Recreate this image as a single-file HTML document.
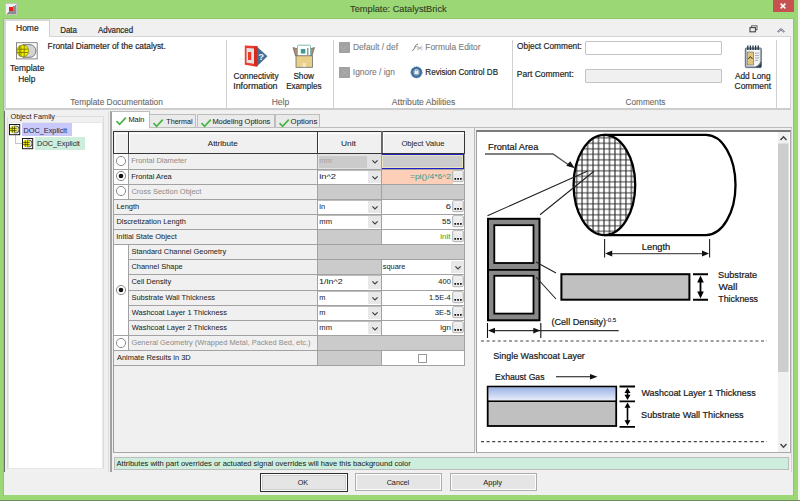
<!DOCTYPE html>
<html><head><meta charset="utf-8">
<style>
*{margin:0;padding:0;box-sizing:border-box}
html,body{width:800px;height:501px;overflow:hidden;background:#9cd775;font-family:"Liberation Sans",sans-serif;color:#1e1e1e;position:relative}
.a{position:absolute}
svg text{white-space:pre}
</style></head><body>
<div class="a" style="left:798px;top:0px;width:2px;height:501px;background:#f3f5f2"></div>
<div class="a" style="left:799.5px;top:0px;width:0.5px;height:501px;background:#d8d8d8"></div>
<div class="a" style="left:0px;top:500px;width:800px;height:1px;background:#6e8f5e"></div>
<svg class="a" style="left:5px;top:3px" width="12" height="12"><defs><linearGradient id="wi" x1="0" y1="0" x2="1" y2="1"><stop offset="0.5" stop-color="#f2f2f2"/><stop offset="0.5" stop-color="#8c8c8c"/></linearGradient></defs><rect x="0.5" y="0.5" width="11" height="11" fill="url(#wi)" stroke="#c4c4c4"/><rect x="4" y="4" width="4" height="4" fill="#ee1c1c"/></svg>
<div class="a" style="left:773px;top:0px;width:20.5px;height:12px;background:#c75050"></div>
<svg class="a" style="left:778px;top:1px" width="10" height="10"><path d="M2.6 2.6 L7.4 7.4 M7.4 2.6 L2.6 7.4" stroke="#fff" stroke-width="1.5"/></svg>
<div class="a" style="left:4px;top:17px;width:789px;height:1px;background:#a0da7a"></div>
<div class="a" style="left:4px;top:18px;width:789px;height:1px;background:#8cc866"></div>
<div class="a" style="left:4px;top:19px;width:789px;height:476px;background:#f0f0f0"></div>
<div class="a" style="left:5px;top:19px;width:787px;height:1px;background:#f6f4f8"></div>
<div class="a" style="left:3px;top:18px;width:1px;height:478px;background:#8cc866"></div>
<div class="a" style="left:4px;top:19px;width:1px;height:92px;background:#d4d4d4"></div>
<div class="a" style="left:793px;top:18px;width:1px;height:478px;background:#8cc866"></div>
<div class="a" style="left:5px;top:19px;width:787px;height:18px;background:#f0f0f0"></div>
<div class="a" style="left:5px;top:36px;width:786px;height:74px;background:#fff;border:1px solid #d5d5d5;border-bottom:2px solid #cdcdcd"></div>
<div class="a" style="left:5px;top:19px;width:45px;height:18px;background:#fff;border-left:1px solid #d5d5d5;border-right:1.5px solid #d0d0d0;border-top:2px solid #d8d8d8"></div>
<svg class="a" style="left:749px;top:25px" width="10" height="8"><rect x="2.6" y="0.8" width="5.4" height="4" fill="none" stroke="#555" stroke-width="0.9"/><rect x="1" y="2.6" width="5.4" height="4.2" fill="#f0f0f0" stroke="#444" stroke-width="1.1"/></svg>
<svg class="a" style="left:776px;top:26px" width="10" height="8"><path d="M1.6 5.6 L4.2 3 Q5 2.2 5.8 3 L8.4 5.6 Q7.6 6.4 6.8 5.6 L5 3.9 L3.2 5.6 Q2.4 6.4 1.6 5.6 Z" fill="none" stroke="#5a5f7a" stroke-width="0.9"/></svg>
<div class="a" style="left:226px;top:40px;width:1px;height:68px;background:#d0d0d0"></div>
<div class="a" style="left:333px;top:40px;width:1px;height:68px;background:#d0d0d0"></div>
<div class="a" style="left:512px;top:40px;width:1px;height:68px;background:#d0d0d0"></div>
<div class="a" style="left:776px;top:40px;width:1px;height:68px;background:#d0d0d0"></div>
<svg class="a" style="left:12px;top:38px" width="30" height="24" viewBox="12 38 30 24">
<rect x="16.5" y="42.7" width="20.7" height="16.2" fill="#fff" stroke="#7a7a7a" stroke-width="0.9"/>
<path d="M22.8 44.7 H30 A5.9 6.3 0 0 1 30 57.3 H22.8 Z" fill="#d4d4d4" stroke="#6a6a6a" stroke-width="0.9"/>
<circle cx="22.8" cy="50.9" r="5.9" fill="#f4f000" stroke="#707000" stroke-width="0.6"/>
<path d="M19.3 45.6 V56.2 M20.9 45.1 V56.7 M24.2 45.1 V56.7 M17.6 49.2 H28 M17.5 52.5 H28" stroke="#7a7a00" stroke-width="0.9"/>
</svg>
<svg class="a" style="left:243px;top:44px" width="26" height="24">
<path d="M14 2.8 L24.5 12.3 L14 22.2 Z" fill="#436e95"/>
<text x="15.3" y="16.2" font-size="9.5" font-weight="bold" fill="#f4f4f4" font-family="Liberation Sans">?</text>
<path d="M1.8 1.4 L14.4 2.2 L14.4 22.6 L1.8 20.8 Z" fill="#ee3a2c"/>
<path d="M11.2 2 L14.4 2.2 L14.4 22.6 L11.2 22.2 Z" fill="#d42a1e"/>
<path d="M3.5 4 L11 4.4 L11 19.8 L3.5 18.8 Z" fill="#dfe3e6"/>
<rect x="5" y="8" width="3.2" height="8" fill="#f23a2a"/>
</svg>
<svg class="a" style="left:291px;top:43px" width="26" height="26">
<path d="M2 4.5 L7 6 L7 13 L4.5 13 Z" fill="#a89070" stroke="#555" stroke-width="0.6"/>
<path d="M23.5 4.5 L18.5 6 L18.5 13 L21 13 Z" fill="#a89070" stroke="#555" stroke-width="0.6"/>
<rect x="6.5" y="2.2" width="13" height="11" rx="1" fill="#fff" stroke="#7fb9b3" stroke-width="1"/>
<rect x="9.8" y="6" width="4.5" height="4.5" fill="#3d9a8f"/>
<rect x="16" y="5" width="1.5" height="7" fill="#9a9a9a"/>
<rect x="5" y="12.8" width="16.5" height="11.5" fill="#e9cf8a" stroke="#6a6a6a" stroke-width="0.8"/>
<rect x="11.5" y="20" width="3.5" height="4" fill="#f3e6bf"/>
</svg>
<svg class="a" style="left:338px;top:41px" width="14" height="40"><rect x="1" y="1" width="11" height="11" fill="#a2a2a2"/><path d="M3.5 6.5 L5.5 8.5 L9.5 4" stroke="#b4b4b4" stroke-width="0.8" fill="none"/><rect x="1" y="26" width="11" height="11" fill="#a2a2a2"/><path d="M3.5 28.5 L9.5 34.5 M9.5 28.5 L3.5 34.5" stroke="#b4b4b4" stroke-width="0.8"/></svg>
<svg class="a" style="left:408px;top:40px" width="16" height="14"><path d="M4.2 10.6 Q5.6 10.4 6.6 8 L8 5.2 Q8.8 3.8 10 4.2" stroke="#7a7a7a" stroke-width="1" fill="none"/><path d="M6 6.6 H8.8" stroke="#8a8a8a" stroke-width="0.7"/><path d="M9.8 6.6 L13.4 9.6 M13.4 6.6 L9.8 9.6" stroke="#9a9a9a" stroke-width="0.9"/><path d="M9.6 6 Q9 8.1 9.6 10.2 M13.8 6 Q14.4 8.1 13.8 10.2" stroke="#b4b4b4" stroke-width="0.6" fill="none"/></svg>
<svg class="a" style="left:410px;top:66px" width="13" height="13">
<circle cx="6.5" cy="6.3" r="5.6" fill="#3d6b97" stroke="#5f89b0" stroke-width="1" stroke-dasharray="1.2 0.9"/>
<circle cx="6.5" cy="6.3" r="3.6" fill="#6f92b3"/>
<rect x="4.5" y="5" width="4" height="3.3" fill="#e8eef3"/>
<path d="M5.3 5 V3.8 H7.7 V5" stroke="#e8eef3" stroke-width="0.8" fill="none"/>
</svg>
<div class="a" style="left:585px;top:41px;width:137px;height:14px;background:#fff;border:1px solid #c3c3c3;border-radius:1px"></div>
<div class="a" style="left:585px;top:69px;width:137px;height:14px;background:#f0f0f0;border:1px solid #c3c3c3;border-radius:1px"></div>
<svg class="a" style="left:744px;top:44px" width="19" height="25">
<rect x="1.3" y="4" width="16" height="19.6" rx="1" fill="#aab3bd" stroke="#4f5f70" stroke-width="0.9"/>
<rect x="2.8" y="6" width="13" height="16" fill="#f4f6f8"/>
<rect x="3.2" y="8" width="6.4" height="13" fill="#e0c580" stroke="#66605a" stroke-width="0.6"/>
<path d="M4.3 15 L6.4 12.6 L8.5 15" stroke="#222" stroke-width="0.9" fill="none"/>
<path d="M11 9.2 H15 M11 11.6 H15 M11 14 H15 M11 16.4 H14" stroke="#8a939c" stroke-width="0.8"/>
<path d="M17.2 17.5 V23.3 H11.5 Z" fill="#2c3e50"/>
<path d="M13.2 22.2 L16.2 19.2" stroke="#fff" stroke-width="0.7"/>
<path d="M3.8 1.5 V6 M6.4 1.5 V6 M9 1.5 V6 M11.6 1.5 V6 M14.2 1.5 V6" stroke="#263544" stroke-width="1.3"/>
</svg>
<div class="a" style="left:4px;top:111px;width:1.2px;height:361px;background:#6d6d6d"></div>
<div class="a" style="left:5px;top:110.5px;width:100px;height:361px;background:#f0f0f0"></div>
<div class="a" style="left:6.5px;top:116.5px;width:97px;height:352px;border:1px solid #dcdcdc;border-top:none"></div>
<div class="a" style="left:56px;top:116px;width:48px;height:1px;background:#dcdcdc"></div>
<div class="a" style="left:8px;top:121.5px;width:95px;height:347px;background:#fff;border:1px solid #e8e8e8"></div>
<div class="a" style="left:21.6px;top:122.6px;width:50.6px;height:13.3px;background:#c8c8fa"></div>
<div class="a" style="left:34.5px;top:136.7px;width:50.9px;height:12.9px;background:#cdeedb"></div>
<div class="a" style="left:14.5px;top:135px;width:1px;height:8.5px;background:#c4c4c4"></div>
<div class="a" style="left:14.5px;top:143px;width:8px;height:1px;background:#c4c4c4"></div>
<svg class="a" style="left:8.7px;top:124px" width="12" height="12">
<rect x="0.5" y="0.5" width="10.2" height="10.2" fill="#fff" stroke="#1a1a1a" stroke-width="1"/>
<path d="M4.6 2.2 H7.6 A2.6 3.3 0 0 1 7.6 8.8 H4.6 Z" fill="#d8d8d8" stroke="#333" stroke-width="0.8"/>
<circle cx="4.4" cy="5.5" r="3.4" fill="#f2ee00"/>
<path d="M3.3 2.3 V8.7 M5.5 2.3 V8.7 M1.2 4.4 H7.6 M1.2 6.6 H7.6" stroke="#3a3a00" stroke-width="0.7"/>
</svg>
<svg class="a" style="left:22px;top:138px" width="12" height="12">
<rect x="0.5" y="0.5" width="10.2" height="10.2" fill="#fff" stroke="#1a1a1a" stroke-width="1"/>
<path d="M4.6 2.2 H7.6 A2.6 3.3 0 0 1 7.6 8.8 H4.6 Z" fill="#d8d8d8" stroke="#333" stroke-width="0.8"/>
<circle cx="4.4" cy="5.5" r="3.4" fill="#f2ee00"/>
<path d="M3.3 2.3 V8.7 M5.5 2.3 V8.7 M1.2 4.4 H7.6 M1.2 6.6 H7.6" stroke="#3a3a00" stroke-width="0.7"/>
</svg>
<div class="a" style="left:107.5px;top:111px;width:1px;height:361px;background:#dedede"></div>
<div class="a" style="left:110px;top:127px;width:682px;height:345px;border-left:2px solid #a2a2a2;border-top:1px solid #c2c2c2;border-right:1px solid #d4d4d4"></div>
<div class="a" style="left:149.3px;top:114px;width:47.19999999999999px;height:14px;background:#eaeaea;border:1px solid #bdbdbd;border-bottom:none"></div>
<div class="a" style="left:196.5px;top:114px;width:78.5px;height:14px;background:#eaeaea;border:1px solid #bdbdbd;border-bottom:none"></div>
<div class="a" style="left:275px;top:114px;width:44.60000000000002px;height:14px;background:#eaeaea;border:1px solid #bdbdbd;border-bottom:none"></div>
<div class="a" style="left:149.3px;top:127px;width:643px;height:1px;background:#bdbdbd"></div>
<div class="a" style="left:110px;top:111px;width:39.5px;height:17px;background:#fff;border:1px solid #bdbdbd;border-left:2px solid #a2a2a2;border-bottom:none"></div>
<div class="a" style="left:112px;top:127px;width:37px;height:1.5px;background:#fff"></div>
<svg class="a" style="left:115px;top:116px" width="12" height="10"><path d="M1.5 5.2 L4.6 8.3 L10.8 1.6" stroke="#45b545" stroke-width="1.7" fill="none"/></svg>
<svg class="a" style="left:152px;top:118px" width="12" height="10"><path d="M1.5 5.2 L4.6 8.3 L10.8 1.6" stroke="#45b545" stroke-width="1.7" fill="none"/></svg>
<svg class="a" style="left:200px;top:118px" width="12" height="10"><path d="M1.5 5.2 L4.6 8.3 L10.8 1.6" stroke="#45b545" stroke-width="1.7" fill="none"/></svg>
<svg class="a" style="left:278px;top:118px" width="12" height="10"><path d="M1.5 5.2 L4.6 8.3 L10.8 1.6" stroke="#45b545" stroke-width="1.7" fill="none"/></svg>
<div class="a" style="left:113px;top:131px;width:352px;height:22.5px;background:#f0f0f0;border:1.5px solid #363636;border-bottom-width:1.5px"></div>
<div class="a" style="left:114.5px;top:132.5px;width:349px;height:1px;background:#fff"></div>
<div class="a" style="left:114.5px;top:132.5px;width:1px;height:20px;background:#fff"></div>
<div class="a" style="left:129px;top:132.5px;width:1px;height:20px;background:#fff"></div>
<div class="a" style="left:128px;top:131px;width:1.2px;height:22px;background:#363636"></div>
<div class="a" style="left:318px;top:132.5px;width:1px;height:20px;background:#fff"></div>
<div class="a" style="left:317px;top:131px;width:1.2px;height:22px;background:#363636"></div>
<div class="a" style="left:382.5px;top:132.5px;width:1px;height:20px;background:#fff"></div>
<div class="a" style="left:380.5px;top:131px;width:2px;height:22px;background:#6a6a6a"></div>
<div class="a" style="left:113px;top:154px;width:15px;height:15px;background:#fff"></div>
<div class="a" style="left:128px;top:154px;width:189px;height:15px;background:#f0f0f0"></div>
<div class="a" style="left:317px;top:154px;width:64px;height:15px;background:#e2e2e2"></div>
<div class="a" style="left:318.5px;top:155.5px;width:48.5px;height:12px;background:#cbcbcb"></div>
<svg class="a" style="left:371px;top:158.5px" width="8" height="6"><path d="M1.4 1.4 L4 4 L6.6 1.4" stroke="#404040" stroke-width="1.2" fill="none"/></svg>
<div class="a" style="left:381px;top:154px;width:83px;height:15px;background:#cbcbcb;border:1.5px solid #2020c8;box-shadow:inset 0 0 0 1px #e8e4c0"></div>
<div class="a" style="left:113px;top:170px;width:15px;height:14px;background:#fff"></div>
<div class="a" style="left:128px;top:170px;width:189px;height:14px;background:#f0f0f0"></div>
<div class="a" style="left:317px;top:170px;width:64px;height:14px;background:#fff;border-top:1px solid #bdbdbd"></div>
<div class="a" style="left:367.5px;top:171px;width:13px;height:12px;background:#e8e8e8"></div>
<svg class="a" style="left:371px;top:174.5px" width="8" height="6"><path d="M1.4 1.4 L4 4 L6.6 1.4" stroke="#404040" stroke-width="1.2" fill="none"/></svg>
<div class="a" style="left:381px;top:170px;width:72px;height:14px;background:#fdcfb8"></div>
<div class="a" style="left:453px;top:170px;width:12px;height:14px;background:#fff"></div>
<svg class="a" style="left:451px;top:169px" width="14" height="15"><rect x="1.7" y="1.7" width="10.6" height="11" rx="1.2" fill="#ececec" stroke="#b0b0b0" stroke-width="1"/><path d="M2.6 3 H11.4" stroke="#fafafa" stroke-width="1"/><path d="M3.4 9.8 h1.7 M6.2 9.8 h1.7 M9 9.8 h1.7" stroke="#151515" stroke-width="1.7"/></svg>
<div class="a" style="left:113px;top:185px;width:15px;height:14px;background:#fff"></div>
<div class="a" style="left:128px;top:185px;width:189px;height:14px;background:#f0f0f0"></div>
<div class="a" style="left:317px;top:185px;width:64px;height:14px;background:#cbcbcb"></div>
<div class="a" style="left:381px;top:185px;width:84px;height:14px;background:#cbcbcb"></div>
<div class="a" style="left:113px;top:200px;width:204px;height:14px;background:#f0f0f0"></div>
<div class="a" style="left:317px;top:200px;width:64px;height:14px;background:#fff;border-top:1px solid #bdbdbd"></div>
<div class="a" style="left:367.5px;top:201px;width:13px;height:12px;background:#e8e8e8"></div>
<svg class="a" style="left:371px;top:204.5px" width="8" height="6"><path d="M1.4 1.4 L4 4 L6.6 1.4" stroke="#404040" stroke-width="1.2" fill="none"/></svg>
<div class="a" style="left:381px;top:200px;width:72px;height:14px;background:#fff"></div>
<div class="a" style="left:453px;top:200px;width:12px;height:14px;background:#fff"></div>
<svg class="a" style="left:451px;top:199px" width="14" height="15"><rect x="1.7" y="1.7" width="10.6" height="11" rx="1.2" fill="#ececec" stroke="#b0b0b0" stroke-width="1"/><path d="M2.6 3 H11.4" stroke="#fafafa" stroke-width="1"/><path d="M3.4 9.8 h1.7 M6.2 9.8 h1.7 M9 9.8 h1.7" stroke="#151515" stroke-width="1.7"/></svg>
<div class="a" style="left:113px;top:215px;width:204px;height:14px;background:#f0f0f0"></div>
<div class="a" style="left:317px;top:215px;width:64px;height:14px;background:#fff;border-top:1px solid #bdbdbd"></div>
<div class="a" style="left:367.5px;top:216px;width:13px;height:12px;background:#e8e8e8"></div>
<svg class="a" style="left:371px;top:219.5px" width="8" height="6"><path d="M1.4 1.4 L4 4 L6.6 1.4" stroke="#404040" stroke-width="1.2" fill="none"/></svg>
<div class="a" style="left:381px;top:215px;width:72px;height:14px;background:#fff"></div>
<div class="a" style="left:453px;top:215px;width:12px;height:14px;background:#fff"></div>
<svg class="a" style="left:451px;top:214px" width="14" height="15"><rect x="1.7" y="1.7" width="10.6" height="11" rx="1.2" fill="#ececec" stroke="#b0b0b0" stroke-width="1"/><path d="M2.6 3 H11.4" stroke="#fafafa" stroke-width="1"/><path d="M3.4 9.8 h1.7 M6.2 9.8 h1.7 M9 9.8 h1.7" stroke="#151515" stroke-width="1.7"/></svg>
<div class="a" style="left:113px;top:230px;width:204px;height:14px;background:#f0f0f0"></div>
<div class="a" style="left:317px;top:230px;width:64px;height:14px;background:#cbcbcb"></div>
<div class="a" style="left:381px;top:230px;width:72px;height:14px;background:#fff"></div>
<div class="a" style="left:453px;top:230px;width:12px;height:14px;background:#fff"></div>
<svg class="a" style="left:451px;top:229px" width="14" height="15"><rect x="1.7" y="1.7" width="10.6" height="11" rx="1.2" fill="#ececec" stroke="#b0b0b0" stroke-width="1"/><path d="M2.6 3 H11.4" stroke="#fafafa" stroke-width="1"/><path d="M3.4 9.8 h1.7 M6.2 9.8 h1.7 M9 9.8 h1.7" stroke="#151515" stroke-width="1.7"/></svg>
<div class="a" style="left:113px;top:245px;width:15px;height:14px;background:#fff"></div>
<div class="a" style="left:128px;top:245px;width:189px;height:14px;background:#f0f0f0"></div>
<div class="a" style="left:317px;top:245px;width:148px;height:14px;background:#cbcbcb"></div>
<div class="a" style="left:113px;top:260px;width:15px;height:14px;background:#fff"></div>
<div class="a" style="left:128px;top:260px;width:189px;height:14px;background:#f0f0f0"></div>
<div class="a" style="left:317px;top:260px;width:64px;height:14px;background:#cbcbcb"></div>
<div class="a" style="left:381px;top:260px;width:84px;height:14px;background:#fff"></div>
<div class="a" style="left:451px;top:261px;width:13px;height:12px;background:#e8e8e8"></div>
<svg class="a" style="left:453.5px;top:264.5px" width="8" height="6"><path d="M1.4 1.4 L4 4 L6.6 1.4" stroke="#404040" stroke-width="1.2" fill="none"/></svg>
<div class="a" style="left:113px;top:275px;width:15px;height:15px;background:#fff"></div>
<div class="a" style="left:128px;top:275px;width:189px;height:15px;background:#f0f0f0"></div>
<div class="a" style="left:317px;top:275px;width:64px;height:15px;background:#fff;border-top:1px solid #bdbdbd"></div>
<div class="a" style="left:367.5px;top:276px;width:13px;height:13px;background:#e8e8e8"></div>
<svg class="a" style="left:371px;top:279.5px" width="8" height="6"><path d="M1.4 1.4 L4 4 L6.6 1.4" stroke="#404040" stroke-width="1.2" fill="none"/></svg>
<div class="a" style="left:381px;top:275px;width:72px;height:15px;background:#fff"></div>
<div class="a" style="left:453px;top:275px;width:12px;height:15px;background:#fff"></div>
<svg class="a" style="left:451px;top:274px" width="14" height="15"><rect x="1.7" y="1.7" width="10.6" height="11" rx="1.2" fill="#ececec" stroke="#b0b0b0" stroke-width="1"/><path d="M2.6 3 H11.4" stroke="#fafafa" stroke-width="1"/><path d="M3.4 9.8 h1.7 M6.2 9.8 h1.7 M9 9.8 h1.7" stroke="#151515" stroke-width="1.7"/></svg>
<div class="a" style="left:113px;top:291px;width:15px;height:14px;background:#fff"></div>
<div class="a" style="left:128px;top:291px;width:189px;height:14px;background:#f0f0f0"></div>
<div class="a" style="left:317px;top:291px;width:64px;height:14px;background:#fff;border-top:1px solid #bdbdbd"></div>
<div class="a" style="left:367.5px;top:292px;width:13px;height:12px;background:#e8e8e8"></div>
<svg class="a" style="left:371px;top:295.5px" width="8" height="6"><path d="M1.4 1.4 L4 4 L6.6 1.4" stroke="#404040" stroke-width="1.2" fill="none"/></svg>
<div class="a" style="left:381px;top:291px;width:72px;height:14px;background:#fff"></div>
<div class="a" style="left:453px;top:291px;width:12px;height:14px;background:#fff"></div>
<svg class="a" style="left:451px;top:290px" width="14" height="15"><rect x="1.7" y="1.7" width="10.6" height="11" rx="1.2" fill="#ececec" stroke="#b0b0b0" stroke-width="1"/><path d="M2.6 3 H11.4" stroke="#fafafa" stroke-width="1"/><path d="M3.4 9.8 h1.7 M6.2 9.8 h1.7 M9 9.8 h1.7" stroke="#151515" stroke-width="1.7"/></svg>
<div class="a" style="left:113px;top:306px;width:15px;height:14px;background:#fff"></div>
<div class="a" style="left:128px;top:306px;width:189px;height:14px;background:#f0f0f0"></div>
<div class="a" style="left:317px;top:306px;width:64px;height:14px;background:#fff;border-top:1px solid #bdbdbd"></div>
<div class="a" style="left:367.5px;top:307px;width:13px;height:12px;background:#e8e8e8"></div>
<svg class="a" style="left:371px;top:310.5px" width="8" height="6"><path d="M1.4 1.4 L4 4 L6.6 1.4" stroke="#404040" stroke-width="1.2" fill="none"/></svg>
<div class="a" style="left:381px;top:306px;width:72px;height:14px;background:#fff"></div>
<div class="a" style="left:453px;top:306px;width:12px;height:14px;background:#fff"></div>
<svg class="a" style="left:451px;top:305px" width="14" height="15"><rect x="1.7" y="1.7" width="10.6" height="11" rx="1.2" fill="#ececec" stroke="#b0b0b0" stroke-width="1"/><path d="M2.6 3 H11.4" stroke="#fafafa" stroke-width="1"/><path d="M3.4 9.8 h1.7 M6.2 9.8 h1.7 M9 9.8 h1.7" stroke="#151515" stroke-width="1.7"/></svg>
<div class="a" style="left:113px;top:321px;width:15px;height:14px;background:#fff"></div>
<div class="a" style="left:128px;top:321px;width:189px;height:14px;background:#f0f0f0"></div>
<div class="a" style="left:317px;top:321px;width:64px;height:14px;background:#fff;border-top:1px solid #bdbdbd"></div>
<div class="a" style="left:367.5px;top:322px;width:13px;height:12px;background:#e8e8e8"></div>
<svg class="a" style="left:371px;top:325.5px" width="8" height="6"><path d="M1.4 1.4 L4 4 L6.6 1.4" stroke="#404040" stroke-width="1.2" fill="none"/></svg>
<div class="a" style="left:381px;top:321px;width:72px;height:14px;background:#fff"></div>
<div class="a" style="left:453px;top:321px;width:12px;height:14px;background:#fff"></div>
<svg class="a" style="left:451px;top:320px" width="14" height="15"><rect x="1.7" y="1.7" width="10.6" height="11" rx="1.2" fill="#ececec" stroke="#b0b0b0" stroke-width="1"/><path d="M2.6 3 H11.4" stroke="#fafafa" stroke-width="1"/><path d="M3.4 9.8 h1.7 M6.2 9.8 h1.7 M9 9.8 h1.7" stroke="#151515" stroke-width="1.7"/></svg>
<div class="a" style="left:113px;top:336px;width:15px;height:14px;background:#fff"></div>
<div class="a" style="left:128px;top:336px;width:189px;height:14px;background:#f0f0f0"></div>
<div class="a" style="left:317px;top:336px;width:148px;height:14px;background:#cbcbcb"></div>
<div class="a" style="left:113px;top:351px;width:204px;height:14px;background:#f0f0f0"></div>
<div class="a" style="left:317px;top:351px;width:64px;height:14px;background:#cbcbcb"></div>
<div class="a" style="left:381px;top:351px;width:84px;height:14px;background:#fff"></div>
<div class="a" style="left:418px;top:353.5px;width:9px;height:9px;background:#fff;border:1px solid #9a9a9a"></div>
<div class="a" style="left:113px;top:245px;width:15px;height:90px;background:#fff"></div>
<div class="a" style="left:113px;top:169px;width:352px;height:1px;background:#a2a2a2"></div>
<div class="a" style="left:113px;top:184px;width:352px;height:1px;background:#a2a2a2"></div>
<div class="a" style="left:113px;top:199px;width:352px;height:1px;background:#a2a2a2"></div>
<div class="a" style="left:113px;top:214px;width:352px;height:1px;background:#a2a2a2"></div>
<div class="a" style="left:113px;top:229px;width:352px;height:1px;background:#a2a2a2"></div>
<div class="a" style="left:113px;top:244px;width:352px;height:1px;background:#a2a2a2"></div>
<div class="a" style="left:128px;top:259px;width:337px;height:1px;background:#a2a2a2"></div>
<div class="a" style="left:128px;top:274px;width:337px;height:1px;background:#a2a2a2"></div>
<div class="a" style="left:128px;top:290px;width:337px;height:1px;background:#a2a2a2"></div>
<div class="a" style="left:128px;top:305px;width:337px;height:1px;background:#a2a2a2"></div>
<div class="a" style="left:128px;top:320px;width:337px;height:1px;background:#a2a2a2"></div>
<div class="a" style="left:113px;top:335px;width:352px;height:1px;background:#a2a2a2"></div>
<div class="a" style="left:113px;top:350px;width:352px;height:1px;background:#a2a2a2"></div>
<div class="a" style="left:113px;top:365px;width:352px;height:1px;background:#a2a2a2"></div>
<div class="a" style="left:128px;top:154px;width:1px;height:15px;background:#a2a2a2"></div>
<div class="a" style="left:317px;top:154px;width:1.2px;height:15px;background:#a2a2a2"></div>
<div class="a" style="left:381px;top:154px;width:1.2px;height:15px;background:#a2a2a2"></div>
<div class="a" style="left:463.8px;top:154px;width:1.2px;height:15px;background:#a2a2a2"></div>
<div class="a" style="left:128px;top:170px;width:1px;height:14px;background:#a2a2a2"></div>
<div class="a" style="left:317px;top:170px;width:1.2px;height:14px;background:#a2a2a2"></div>
<div class="a" style="left:381px;top:170px;width:1.2px;height:14px;background:#a2a2a2"></div>
<div class="a" style="left:463.8px;top:170px;width:1.2px;height:14px;background:#a2a2a2"></div>
<div class="a" style="left:128px;top:185px;width:1px;height:14px;background:#a2a2a2"></div>
<div class="a" style="left:317px;top:185px;width:1.2px;height:14px;background:#a2a2a2"></div>
<div class="a" style="left:381px;top:185px;width:1.2px;height:14px;background:#a2a2a2"></div>
<div class="a" style="left:463.8px;top:185px;width:1.2px;height:14px;background:#a2a2a2"></div>
<div class="a" style="left:317px;top:200px;width:1.2px;height:14px;background:#a2a2a2"></div>
<div class="a" style="left:381px;top:200px;width:1.2px;height:14px;background:#a2a2a2"></div>
<div class="a" style="left:463.8px;top:200px;width:1.2px;height:14px;background:#a2a2a2"></div>
<div class="a" style="left:317px;top:215px;width:1.2px;height:14px;background:#a2a2a2"></div>
<div class="a" style="left:381px;top:215px;width:1.2px;height:14px;background:#a2a2a2"></div>
<div class="a" style="left:463.8px;top:215px;width:1.2px;height:14px;background:#a2a2a2"></div>
<div class="a" style="left:317px;top:230px;width:1.2px;height:14px;background:#a2a2a2"></div>
<div class="a" style="left:381px;top:230px;width:1.2px;height:14px;background:#a2a2a2"></div>
<div class="a" style="left:463.8px;top:230px;width:1.2px;height:14px;background:#a2a2a2"></div>
<div class="a" style="left:128px;top:245px;width:1px;height:14px;background:#a2a2a2"></div>
<div class="a" style="left:317px;top:245px;width:1.2px;height:14px;background:#a2a2a2"></div>
<div class="a" style="left:463.8px;top:245px;width:1.2px;height:14px;background:#a2a2a2"></div>
<div class="a" style="left:128px;top:260px;width:1px;height:14px;background:#a2a2a2"></div>
<div class="a" style="left:317px;top:260px;width:1.2px;height:14px;background:#a2a2a2"></div>
<div class="a" style="left:381px;top:260px;width:1.2px;height:14px;background:#a2a2a2"></div>
<div class="a" style="left:463.8px;top:260px;width:1.2px;height:14px;background:#a2a2a2"></div>
<div class="a" style="left:128px;top:275px;width:1px;height:15px;background:#a2a2a2"></div>
<div class="a" style="left:317px;top:275px;width:1.2px;height:15px;background:#a2a2a2"></div>
<div class="a" style="left:381px;top:275px;width:1.2px;height:15px;background:#a2a2a2"></div>
<div class="a" style="left:463.8px;top:275px;width:1.2px;height:15px;background:#a2a2a2"></div>
<div class="a" style="left:128px;top:291px;width:1px;height:14px;background:#a2a2a2"></div>
<div class="a" style="left:317px;top:291px;width:1.2px;height:14px;background:#a2a2a2"></div>
<div class="a" style="left:381px;top:291px;width:1.2px;height:14px;background:#a2a2a2"></div>
<div class="a" style="left:463.8px;top:291px;width:1.2px;height:14px;background:#a2a2a2"></div>
<div class="a" style="left:128px;top:306px;width:1px;height:14px;background:#a2a2a2"></div>
<div class="a" style="left:317px;top:306px;width:1.2px;height:14px;background:#a2a2a2"></div>
<div class="a" style="left:381px;top:306px;width:1.2px;height:14px;background:#a2a2a2"></div>
<div class="a" style="left:463.8px;top:306px;width:1.2px;height:14px;background:#a2a2a2"></div>
<div class="a" style="left:128px;top:321px;width:1px;height:14px;background:#a2a2a2"></div>
<div class="a" style="left:317px;top:321px;width:1.2px;height:14px;background:#a2a2a2"></div>
<div class="a" style="left:381px;top:321px;width:1.2px;height:14px;background:#a2a2a2"></div>
<div class="a" style="left:463.8px;top:321px;width:1.2px;height:14px;background:#a2a2a2"></div>
<div class="a" style="left:128px;top:336px;width:1px;height:14px;background:#a2a2a2"></div>
<div class="a" style="left:317px;top:336px;width:1.2px;height:14px;background:#a2a2a2"></div>
<div class="a" style="left:463.8px;top:336px;width:1.2px;height:14px;background:#a2a2a2"></div>
<div class="a" style="left:317px;top:351px;width:1.2px;height:14px;background:#a2a2a2"></div>
<div class="a" style="left:381px;top:351px;width:1.2px;height:14px;background:#a2a2a2"></div>
<div class="a" style="left:463.8px;top:351px;width:1.2px;height:14px;background:#a2a2a2"></div>
<div class="a" style="left:112.5px;top:153px;width:1.5px;height:212px;background:#a2a2a2"></div>
<svg class="a" style="left:115px;top:155.1px" width="12" height="12"><circle cx="6" cy="6" r="4.6" fill="#fff" stroke="#8c8c8c" stroke-width="1"/></svg>
<svg class="a" style="left:115px;top:170.2px" width="12" height="12"><circle cx="6" cy="6" r="4.6" fill="#fff" stroke="#8c8c8c" stroke-width="1"/><circle cx="6" cy="6" r="2.3" fill="#141414"/></svg>
<svg class="a" style="left:115px;top:185.3px" width="12" height="12"><circle cx="6" cy="6" r="4.6" fill="#fff" stroke="#8c8c8c" stroke-width="1"/></svg>
<svg class="a" style="left:115px;top:283.5px" width="12" height="12"><circle cx="6" cy="6" r="4.6" fill="#fff" stroke="#8c8c8c" stroke-width="1"/><circle cx="6" cy="6" r="2.3" fill="#141414"/></svg>
<svg class="a" style="left:115px;top:337.0px" width="12" height="12"><circle cx="6" cy="6" r="4.6" fill="#fff" stroke="#8c8c8c" stroke-width="1"/></svg>
<div class="a" style="left:113px;top:152.5px;width:352px;height:1.5px;background:#363636"></div>
<div class="a" style="left:474px;top:127.5px;width:1px;height:325px;background:#b8b8b8"></div>
<div class="a" style="left:112.5px;top:366px;width:1.2px;height:87px;background:#9c9c9c"></div>
<div class="a" style="left:112.5px;top:452px;width:362px;height:1.3px;background:#a8a8a8"></div>
<div class="a" style="left:112.5px;top:453.5px;width:362px;height:1px;background:#fafafa"></div>
<div class="a" style="left:114px;top:456.5px;width:675px;height:13px;background:#cdeedc;border:1px solid #bcbcbc"></div>
<div class="a" style="left:260px;top:473px;width:88px;height:19px;background:#e5e5e5;border:1px solid #2d2d2d;box-shadow:inset 0 0 0 1px #fdfdfd, inset 0 0 0 2px #d0d0d0"></div>
<div class="a" style="left:355px;top:473.3px;width:87px;height:18.2px;background:#e5e5e5;border:1px solid #adadad;box-shadow:inset 0 0 0 1px #fdfdfd"></div>
<div class="a" style="left:449.5px;top:473.3px;width:87.3px;height:18.2px;background:#e5e5e5;border:1px solid #adadad;box-shadow:inset 0 0 0 1px #fdfdfd"></div>
<!-- image panel -->
<div class="a" style="left:476px;top:130px;width:315px;height:323px;background:#fff;border:1px solid #a8a8a8;border-top:2px solid #7a7a7a;border-left:1px solid #a0a0a0"></div>
<svg class="a" style="left:0;top:0" width="800" height="501" viewBox="0 0 800 501">
<defs>
<pattern id="grid" patternUnits="userSpaceOnUse" x="573.86" y="173.55" width="5.48" height="5.5">
<rect x="0" y="0" width="5.48" height="5.5" fill="#fff"/>
<path d="M0 2.75 H5.48 M2.74 0 V5.5" stroke="#2a2a2a" stroke-width="1.1"/>
</pattern>
<linearGradient id="wash" x1="0" y1="0" x2="0" y2="1">
<stop offset="0" stop-color="#9cb3e6"/><stop offset="1" stop-color="#e9eefa"/>
</linearGradient>
<clipPath id="pclip"><rect x="478" y="132" width="300" height="320"/></clipPath>
</defs>
<g clip-path="url(#pclip)">
<path d="M485 154 H553 L571 166.5" stroke="#555" stroke-width="1.4" fill="none"/>
<path d="M574.8 168.2 L566.3 165.8 L570.2 161.2 Z" fill="#111"/>
<path d="M604.4 134.9 H706 A29.5 50.1 0 0 1 706 235.1 H604.4" stroke="#000" stroke-width="2.3" fill="#fff"/>
<ellipse cx="604.4" cy="185" rx="30.8" ry="50.1" fill="url(#grid)" stroke="#000" stroke-width="2.3"/>
<path d="M487.5 215.8 L587.2 171.2 M540 214.7 L594 171.2" stroke="#222" stroke-width="1.1" fill="none"/>
<!-- length dim -->
<path d="M604.6 239 V257.5 M709.6 239 V257.5" stroke="#222" stroke-width="1.1"/>
<path d="M608 253.6 H706" stroke="#555" stroke-width="1.4"/>
<path d="M605.2 253.6 L612.2 250.6 L612.2 256.6 Z M709 253.6 L702 250.6 L702 256.6 Z" fill="#111"/>
<!-- squares -->
<rect x="488" y="218.8" width="51.5" height="101.5" fill="#888" stroke="#000" stroke-width="2"/>
<path d="M488 269.8 H539.5" stroke="#000" stroke-width="1.8"/>
<rect x="494.3" y="225.2" width="39.2" height="37.8" fill="#fff" stroke="#000" stroke-width="1.8"/>
<rect x="494.3" y="275.8" width="39.2" height="37.8" fill="#fff" stroke="#000" stroke-width="1.8"/>
<path d="M536 262 L556 273 M536 277 L556 299" stroke="#222" stroke-width="1.1"/>
<rect x="561.4" y="274.2" width="128" height="25.5" fill="#c0c0c0" stroke="#000" stroke-width="2"/>
<path d="M693 274.2 H708 M693 299.8 H708" stroke="#000" stroke-width="2"/>
<path d="M700.5 280 V294" stroke="#000" stroke-width="1.8"/>
<path d="M700.5 275.5 L697.2 282.5 L703.8 282.5 Z M700.5 298.5 L697.2 291.5 L703.8 291.5 Z" fill="#000"/>
<!-- cell density dim -->
<path d="M487.5 323 V338 M540.8 323 V338" stroke="#111" stroke-width="1.1"/>
<path d="M490 330.6 H618.7" stroke="#333" stroke-width="1.2"/>
<path d="M488 330.6 L495 327.8 L495 333.4 Z M540.3 330.6 L533.3 327.8 L533.3 333.4 Z" fill="#111"/>
<path d="M481 341 H767" stroke="#444" stroke-width="1.1" stroke-dasharray="3 2.6"/>
<path d="M556 376.8 H592" stroke="#111" stroke-width="1.1"/>
<path d="M597.5 376.8 L590 374 L590 379.6 Z" fill="#111"/>
<rect x="487.7" y="386.6" width="128.5" height="39.4" fill="#c0c0c0" stroke="#000" stroke-width="1.8"/>
<rect x="488.6" y="387.5" width="126.7" height="13" fill="url(#wash)"/>
<path d="M487.7 401.2 H616.2" stroke="#000" stroke-width="1.6"/>
<path d="M619.5 386.5 H635 M619.5 401.3 H635 M619.5 426.8 H635" stroke="#000" stroke-width="1.8"/>
<path d="M627.5 390 V398 M627.5 405 V423" stroke="#000" stroke-width="1.6"/>
<path d="M627.5 387.8 L624.5 393 L630.5 393 Z M627.5 400 L624.5 394.8 L630.5 394.8 Z M627.5 402.6 L624.5 407.8 L630.5 407.8 Z M627.5 425.5 L624.5 420.3 L630.5 420.3 Z" fill="#000"/>
<path d="M481 441.6 H767" stroke="#444" stroke-width="1.1" stroke-dasharray="3 2.6"/>
</g>
<!-- scrollbar -->
<rect x="778" y="132" width="11" height="320" fill="#f0f0f0"/>
<rect x="778" y="143.5" width="10.5" height="228.5" fill="#cdcdcd"/>
<path d="M780.5 140 L783.5 136.8 L786.5 140" stroke="#444" stroke-width="1.4" fill="none"/>
<path d="M780.5 444 L783.5 447.2 L786.5 444" stroke="#444" stroke-width="1.4" fill="none"/>
</svg>

<svg class="a" style="left:0;top:0" width="800" height="501" font-family="Liberation Sans, sans-serif">
<text x="350.00" y="12" font-size="9.3" textLength="96.69" lengthAdjust="spacingAndGlyphs" fill="#30402a" stroke="#30402a" stroke-width="0.12">Template: CatalystBrick</text>
<text x="16.00" y="31" font-size="8.3" textLength="22.68" lengthAdjust="spacingAndGlyphs" fill="#1e1e1e" stroke="#1e1e1e" stroke-width="0.18">Home</text>
<text x="60.15" y="32.7" font-size="8.3" textLength="16.86" lengthAdjust="spacingAndGlyphs" fill="#1e1e1e" stroke="#1e1e1e" stroke-width="0.18">Data</text>
<text x="97.98" y="32.7" font-size="8.3" textLength="35.12" lengthAdjust="spacingAndGlyphs" fill="#1e1e1e" stroke="#1e1e1e" stroke-width="0.18">Advanced</text>
<text x="10.06" y="70.9" font-size="8.3" textLength="34.31" lengthAdjust="spacingAndGlyphs" fill="#1e1e1e" stroke="#1e1e1e" stroke-width="0.18">Template</text>
<text x="18.22" y="81.75" font-size="8.3" textLength="17.13" lengthAdjust="spacingAndGlyphs" fill="#1e1e1e" stroke="#1e1e1e" stroke-width="0.18">Help</text>
<text x="47.57" y="48.8" font-size="8.3" textLength="118.19" lengthAdjust="spacingAndGlyphs" fill="#1e1e1e" stroke="#1e1e1e" stroke-width="0.18">Frontal Diameter of the catalyst.</text>
<text x="70.32" y="104.7" font-size="8.3" textLength="92.63" lengthAdjust="spacingAndGlyphs" fill="#6a6a6a" stroke="#6a6a6a" stroke-width="0.1">Template Documentation</text>
<text x="233.58" y="78.5" font-size="8.3" textLength="44.94" lengthAdjust="spacingAndGlyphs" fill="#1e1e1e" stroke="#1e1e1e" stroke-width="0.18">Connectivity</text>
<text x="233.18" y="89.4" font-size="8.3" textLength="44.40" lengthAdjust="spacingAndGlyphs" fill="#1e1e1e" stroke="#1e1e1e" stroke-width="0.18">Information</text>
<text x="293.38" y="78.6" font-size="8.3" textLength="20.60" lengthAdjust="spacingAndGlyphs" fill="#1e1e1e" stroke="#1e1e1e" stroke-width="0.18">Show</text>
<text x="286.24" y="89.25" font-size="8.3" textLength="35.30" lengthAdjust="spacingAndGlyphs" fill="#1e1e1e" stroke="#1e1e1e" stroke-width="0.18">Examples</text>
<text x="271.70" y="104.7" font-size="8.3" textLength="17.45" lengthAdjust="spacingAndGlyphs" fill="#6a6a6a" stroke="#6a6a6a" stroke-width="0.1">Help</text>
<text x="352.91" y="50.4" font-size="8.3" textLength="45.08" lengthAdjust="spacingAndGlyphs" fill="#7c7c7c" stroke="#7c7c7c" stroke-width="0.1">Default / def</text>
<text x="352.83" y="75" font-size="8.3" textLength="42.13" lengthAdjust="spacingAndGlyphs" fill="#7c7c7c" stroke="#7c7c7c" stroke-width="0.1">Ignore / ign</text>
<text x="425.31" y="50.4" font-size="8.3" textLength="55.22" lengthAdjust="spacingAndGlyphs" fill="#7c7c7c" stroke="#7c7c7c" stroke-width="0.1">Formula Editor</text>
<text x="425.34" y="75" font-size="8.3" textLength="72.69" lengthAdjust="spacingAndGlyphs" fill="#1e1e1e" stroke="#1e1e1e" stroke-width="0.18">Revision Control DB</text>
<text x="391.88" y="104.7" font-size="8.3" textLength="63.42" lengthAdjust="spacingAndGlyphs" fill="#6a6a6a" stroke="#6a6a6a" stroke-width="0.1">Attribute Abilities</text>
<text x="517.11" y="48.8" font-size="8.3" textLength="64.65" lengthAdjust="spacingAndGlyphs" fill="#1e1e1e" stroke="#1e1e1e" stroke-width="0.18">Object Comment:</text>
<text x="516.81" y="76.8" font-size="8.3" textLength="56.97" lengthAdjust="spacingAndGlyphs" fill="#1e1e1e" stroke="#1e1e1e" stroke-width="0.18">Part Comment:</text>
<text x="625.58" y="104.7" font-size="8.3" textLength="39.71" lengthAdjust="spacingAndGlyphs" fill="#6a6a6a" stroke="#6a6a6a" stroke-width="0.1">Comments</text>
<text x="734.98" y="78.8" font-size="8.3" textLength="35.55" lengthAdjust="spacingAndGlyphs" fill="#1e1e1e" stroke="#1e1e1e" stroke-width="0.18">Add Long</text>
<text x="734.57" y="89.3" font-size="8.3" textLength="36.48" lengthAdjust="spacingAndGlyphs" fill="#1e1e1e" stroke="#1e1e1e" stroke-width="0.18">Comment</text>
<text x="10.51" y="119" font-size="7.45" textLength="44.51" lengthAdjust="spacingAndGlyphs" fill="#2a2a2a" stroke="#2a2a2a" stroke-width="0.04">Object Family</text>
<text x="23.50" y="132.5" font-size="7.45" textLength="43.45" lengthAdjust="spacingAndGlyphs" fill="#2a2a3a" stroke="#2a2a3a" stroke-width="0.04">DOC_Explicit</text>
<text x="37.01" y="146" font-size="7.45" textLength="42.84" lengthAdjust="spacingAndGlyphs" fill="#2a2a3a" stroke="#2a2a3a" stroke-width="0.04">DOC_Explicit</text>
<text x="128.39" y="122.4" font-size="7.45" textLength="16.10" lengthAdjust="spacingAndGlyphs" fill="#1e1e1e" stroke="#1e1e1e" stroke-width="0.05">Main</text>
<text x="166.34" y="123.8" font-size="7.45" textLength="26.14" lengthAdjust="spacingAndGlyphs" fill="#1e1e1e" stroke="#1e1e1e" stroke-width="0.05">Thermal</text>
<text x="212.39" y="123.8" font-size="7.45" textLength="57.88" lengthAdjust="spacingAndGlyphs" fill="#1e1e1e" stroke="#1e1e1e" stroke-width="0.05">Modeling Options</text>
<text x="290.64" y="123.8" font-size="7.45" textLength="26.64" lengthAdjust="spacingAndGlyphs" fill="#1e1e1e" stroke="#1e1e1e" stroke-width="0.05">Options</text>
<text x="207.78" y="145.7" font-size="7.45" textLength="29.97" lengthAdjust="spacingAndGlyphs" fill="#1e1e1e" stroke="#1e1e1e" stroke-width="0.05">Attribute</text>
<text x="341.05" y="145.7" font-size="7.45" textLength="14.90" lengthAdjust="spacingAndGlyphs" fill="#1e1e1e" stroke="#1e1e1e" stroke-width="0.05">Unit</text>
<text x="401.44" y="145.7" font-size="7.45" textLength="43.00" lengthAdjust="spacingAndGlyphs" fill="#1e1e1e" stroke="#1e1e1e" stroke-width="0.05">Object Value</text>
<text x="131.19" y="162.7" font-size="7.9" textLength="55.48" lengthAdjust="spacingAndGlyphs" fill="#8e8e8e" stroke="#8e8e8e" stroke-width="0.04">Frontal Diameter</text>
<text x="319.30" y="162.7" font-size="7.9" textLength="12.71" lengthAdjust="spacingAndGlyphs" fill="#a8a8a8" stroke="#a8a8a8" stroke-width="0.1">mm</text>
<text x="131.19" y="178.7" font-size="7.9" textLength="40.58" lengthAdjust="spacingAndGlyphs" fill="#1e1e1e" stroke="#1e1e1e" stroke-width="0.04">Frontal Area</text>
<text x="319.17" y="178.7" font-size="7.9" textLength="16.89" lengthAdjust="spacingAndGlyphs" fill="#1e1e1e" stroke="#1e1e1e" stroke-width="0.04">in^2</text>
<text x="409.98" y="178.7" font-size="7.9" textLength="40.94" lengthAdjust="spacingAndGlyphs" fill="#3a9a8c" stroke="#3a9a8c" stroke-width="0.04">=pi()/4*6^2</text>
<text x="131.42" y="193.7" font-size="7.9" textLength="69.97" lengthAdjust="spacingAndGlyphs" fill="#8e8e8e" stroke="#8e8e8e" stroke-width="0.04">Cross Section Object</text>
<text x="116.39" y="208.7" font-size="7.9" textLength="22.79" lengthAdjust="spacingAndGlyphs" fill="#1e1e1e" stroke="#1e1e1e" stroke-width="0.04">Length</text>
<text x="319.30" y="208.7" font-size="7.9" textLength="5.80" lengthAdjust="spacingAndGlyphs" fill="#1e1e1e" stroke="#1e1e1e" stroke-width="0.04">in</text>
<text x="445.72" y="208.7" font-size="7.9" textLength="5.19" lengthAdjust="spacingAndGlyphs" fill="#1e1e1e" stroke="#1e1e1e" stroke-width="0.04">6</text>
<text x="116.39" y="223.7" font-size="7.9" textLength="69.57" lengthAdjust="spacingAndGlyphs" fill="#1e1e1e" stroke="#1e1e1e" stroke-width="0.04">Discretization Length</text>
<text x="319.30" y="223.7" font-size="7.9" textLength="12.71" lengthAdjust="spacingAndGlyphs" fill="#1e1e1e" stroke="#1e1e1e" stroke-width="0.04">mm</text>
<text x="441.98" y="223.7" font-size="7.9" textLength="8.86" lengthAdjust="spacingAndGlyphs" fill="#1e1e1e" stroke="#1e1e1e" stroke-width="0.04">55</text>
<text x="116.31" y="238.7" font-size="7.9" textLength="60.46" lengthAdjust="spacingAndGlyphs" fill="#1e1e1e" stroke="#1e1e1e" stroke-width="0.04">Initial State Object</text>
<text x="440.26" y="238.7" font-size="7.9" textLength="10.29" lengthAdjust="spacingAndGlyphs" fill="#2fae2f" stroke="#2fae2f" stroke-width="0.04">init</text>
<text x="131.46" y="253.7" font-size="7.9" textLength="94.84" lengthAdjust="spacingAndGlyphs" fill="#1e1e1e" stroke="#1e1e1e" stroke-width="0.04">Standard Channel Geometry</text>
<text x="131.42" y="268.7" font-size="7.9" textLength="51.36" lengthAdjust="spacingAndGlyphs" fill="#1e1e1e" stroke="#1e1e1e" stroke-width="0.04">Channel Shape</text>
<text x="382.69" y="268.7" font-size="7.9" textLength="22.78" lengthAdjust="spacingAndGlyphs" fill="#1e1e1e" stroke="#1e1e1e" stroke-width="0.04">square</text>
<text x="131.42" y="283.7" font-size="7.9" textLength="39.75" lengthAdjust="spacingAndGlyphs" fill="#1e1e1e" stroke="#1e1e1e" stroke-width="0.04">Cell Density</text>
<text x="319.12" y="283.7" font-size="7.9" textLength="23.63" lengthAdjust="spacingAndGlyphs" fill="#1e1e1e" stroke="#1e1e1e" stroke-width="0.04">1/in^2</text>
<text x="438.33" y="283.7" font-size="7.9" textLength="12.47" lengthAdjust="spacingAndGlyphs" fill="#1e1e1e" stroke="#1e1e1e" stroke-width="0.04">400</text>
<text x="131.46" y="299.7" font-size="7.9" textLength="83.64" lengthAdjust="spacingAndGlyphs" fill="#1e1e1e" stroke="#1e1e1e" stroke-width="0.04">Substrate Wall Thickness</text>
<text x="319.31" y="299.7" font-size="7.9" textLength="6.21" lengthAdjust="spacingAndGlyphs" fill="#1e1e1e" stroke="#1e1e1e" stroke-width="0.04">m</text>
<text x="428.94" y="299.7" font-size="7.9" textLength="21.78" lengthAdjust="spacingAndGlyphs" fill="#1e1e1e" stroke="#1e1e1e" stroke-width="0.04">1.5E-4</text>
<text x="131.77" y="314.7" font-size="7.9" textLength="95.24" lengthAdjust="spacingAndGlyphs" fill="#1e1e1e" stroke="#1e1e1e" stroke-width="0.04">Washcoat Layer 1 Thickness</text>
<text x="319.31" y="314.7" font-size="7.9" textLength="6.21" lengthAdjust="spacingAndGlyphs" fill="#1e1e1e" stroke="#1e1e1e" stroke-width="0.04">m</text>
<text x="434.71" y="314.7" font-size="7.9" textLength="16.11" lengthAdjust="spacingAndGlyphs" fill="#1e1e1e" stroke="#1e1e1e" stroke-width="0.04">3E-5</text>
<text x="131.77" y="329.7" font-size="7.9" textLength="95.24" lengthAdjust="spacingAndGlyphs" fill="#1e1e1e" stroke="#1e1e1e" stroke-width="0.04">Washcoat Layer 2 Thickness</text>
<text x="319.30" y="329.7" font-size="7.9" textLength="12.71" lengthAdjust="spacingAndGlyphs" fill="#1e1e1e" stroke="#1e1e1e" stroke-width="0.04">mm</text>
<text x="440.26" y="329.7" font-size="7.9" textLength="10.77" lengthAdjust="spacingAndGlyphs" fill="#1e1e1e" stroke="#1e1e1e" stroke-width="0.04">ign</text>
<text x="131.43" y="344.7" font-size="7.9" textLength="179.16" lengthAdjust="spacingAndGlyphs" fill="#8e8e8e" stroke="#8e8e8e" stroke-width="0.04">General Geometry (Wrapped Metal, Packed Bed, etc.)</text>
<text x="116.99" y="359.7" font-size="7.9" textLength="73.70" lengthAdjust="spacingAndGlyphs" fill="#1e1e1e" stroke="#1e1e1e" stroke-width="0.04">Animate Results in 3D</text>
<text x="116.58" y="466.2" font-size="7.45" textLength="294.13" lengthAdjust="spacingAndGlyphs" fill="#1e1e1e" stroke="#1e1e1e" stroke-width="0.04">Attributes with part overrides or actuated signal overrides will have this background color</text>
<text x="297.66" y="485" font-size="7.45" textLength="10.42" lengthAdjust="spacingAndGlyphs" fill="#1e1e1e" stroke="#1e1e1e" stroke-width="0.04">OK</text>
<text x="386.63" y="485" font-size="7.45" textLength="22.61" lengthAdjust="spacingAndGlyphs" fill="#1e1e1e" stroke="#1e1e1e" stroke-width="0.04">Cancel</text>
<text x="483.23" y="485" font-size="7.45" textLength="18.78" lengthAdjust="spacingAndGlyphs" fill="#1e1e1e" stroke="#1e1e1e" stroke-width="0.04">Apply</text>
<text x="487.99" y="150" font-size="9.2" textLength="50.31" lengthAdjust="spacingAndGlyphs" fill="#1a1a1a" stroke="#1a1a1a" stroke-width="0.22">Frontal Area</text>
<text x="641.84" y="250" font-size="9.2" textLength="28.47" lengthAdjust="spacingAndGlyphs" fill="#1a1a1a" stroke="#1a1a1a" stroke-width="0.22">Length</text>
<text x="718.09" y="278" font-size="9.2" textLength="39.12" lengthAdjust="spacingAndGlyphs" fill="#1a1a1a" stroke="#1a1a1a" stroke-width="0.22">Substrate</text>
<text x="718.46" y="290" font-size="9.2" textLength="18.91" lengthAdjust="spacingAndGlyphs" fill="#1a1a1a" stroke="#1a1a1a" stroke-width="0.22">Wall</text>
<text x="718.31" y="302" font-size="9.2" textLength="39.72" lengthAdjust="spacingAndGlyphs" fill="#1a1a1a" stroke="#1a1a1a" stroke-width="0.22">Thickness</text>
<text x="551.44" y="325" font-size="9.2" textLength="54.63" lengthAdjust="spacingAndGlyphs" fill="#1a1a1a" stroke="#1a1a1a" stroke-width="0.22">(Cell Density)</text>
<text x="605.73" y="322" font-size="5.5" textLength="10.53" lengthAdjust="spacingAndGlyphs" fill="#1a1a1a" stroke="#1a1a1a" stroke-width="0.1">-0.5</text>
<text x="493.30" y="359" font-size="9.2" textLength="91.55" lengthAdjust="spacingAndGlyphs" fill="#1a1a1a" stroke="#1a1a1a" stroke-width="0.22">Single Washcoat Layer</text>
<text x="495.09" y="380" font-size="9.2" textLength="49.42" lengthAdjust="spacingAndGlyphs" fill="#1a1a1a" stroke="#1a1a1a" stroke-width="0.22">Exhaust Gas</text>
<text x="641.46" y="396" font-size="9.2" textLength="114.15" lengthAdjust="spacingAndGlyphs" fill="#1a1a1a" stroke="#1a1a1a" stroke-width="0.22">Washcoat Layer 1 Thickness</text>
<text x="641.09" y="418" font-size="9.2" textLength="102.54" lengthAdjust="spacingAndGlyphs" fill="#1a1a1a" stroke="#1a1a1a" stroke-width="0.22">Substrate Wall Thickness</text>
</svg>
</body></html>
